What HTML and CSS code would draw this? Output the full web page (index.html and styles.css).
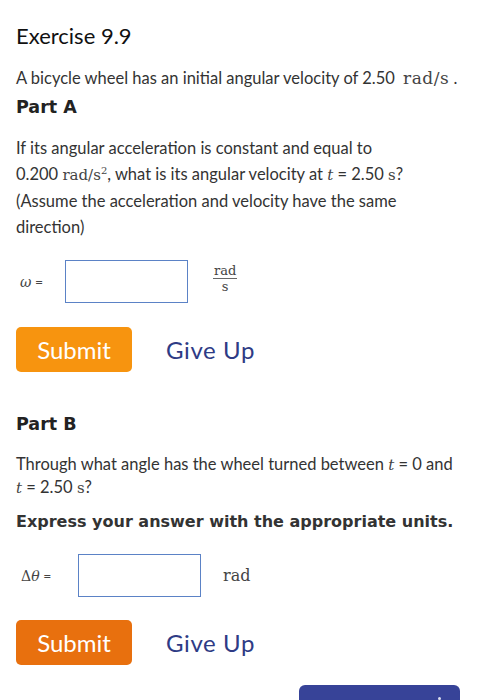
FILE: index.html
```html
<!DOCTYPE html>
<html>
<head>
<meta charset="utf-8">
<link rel="stylesheet" href="styles.css">
</head>
<body>
<div class="page">
  <h1 class="title">Exercise 9.9</h1>
  <p class="intro">A bicycle wheel has an initial angular velocity of 2.50 <span class="math unit-gap">rad/s</span> .</p>
  <h2 class="part part-a">Part A</h2>
  <p class="question">If its angular acceleration is constant and equal to<br>0.200 <span class="math">rad/s<sup>2</sup></span>, what is its angular velocity at <span class="math var">t</span> = 2.50 <span class="math">s</span>?<br>(Assume the acceleration and velocity have the same<br>direction)</p>
  <div class="answer answer-a">
    <span class="label"><span class="math var">ω</span> =</span>
    <span class="box"></span>
    <span class="frac"><span class="num">rad</span><span class="den">s</span></span>
  </div>
  <div class="actions">
    <span class="btn btn-a">Submit</span>
    <span class="giveup">Give Up</span>
  </div>
  <h2 class="part part-b">Part B</h2>
  <p class="question-b">Through what angle has the wheel turned between <span class="math var">t</span> = 0 and<br><span class="math var">t</span> = 2.50 <span class="math">s</span>?</p>
  <p class="express">Express your answer with the appropriate units.</p>
  <div class="answer answer-b">
    <span class="label"><span class="math">Δ</span><span class="math var">θ</span> =</span>
    <span class="box"></span>
    <span class="math unit">rad</span>
  </div>
  <div class="actions actions-b">
    <span class="btn btn-b">Submit</span>
    <span class="giveup">Give Up</span>
  </div>
  <div class="footer">
    <span class="next"><span class="dot"></span></span>
  </div>
</div>
</body>
</html>
```
FILE: styles.css
```css
html, body {
  margin: 0;
  padding: 0;
  background: #ffffff;
}
body {
  font-family: Lato, "Open Sans", sans-serif;
  color: #333333;
  overflow: hidden;
}
.page {
  padding: 0 16px;
  width: 446px;
  height: 700px;
  display: flex;
  flex-direction: column;
}
.title {
  font-size: 22px;
  font-weight: 400;
  line-height: 28px;
  margin: 22px 0 0;
  color: #111111;
}
.intro {
  font-size: 16.5px;
  line-height: 24px;
  margin: 16px 0 0;
}
.math {
  font-family: "DejaVu Serif", "Liberation Serif", serif;
  font-size: 15px;
  color: #444444;
}
.var {
  font-style: italic;
}
.unit-gap {
  margin-left: 4px;
  font-size: 17px;
  letter-spacing: 0.5px;
}
.math sup {
  font-size: 10px;
  line-height: 0;
}
.part {
  font-family: "DejaVu Sans", sans-serif;
  font-size: 17.5px;
  font-weight: 700;
  line-height: 24px;
  margin: 5px 0 0;
  color: #222222;
}
.question {
  font-size: 16.5px;
  line-height: 26px;
  margin: 16px 0 0;
}
.answer {
  display: flex;
  align-items: center;
}
.answer-a {
  margin-top: 20px;
}
.label {
  font-size: 14px;
  color: #444444;
  width: 49px;
  padding-left: 4px;
  box-sizing: border-box;
}
.answer-b .label {
  width: 62px;
  padding-left: 5px;
}
.label .math {
  font-size: 14px;
}
.box {
  width: 121px;
  height: 41px;
  border: 1px solid #5b82c6;
  box-sizing: content-box;
}
.frac {
  display: flex;
  flex-direction: column;
  align-items: center;
  margin-left: 25px;
  margin-top: -6px;
  font-family: "DejaVu Serif", "Liberation Serif", serif;
  font-size: 13px;
  color: #444444;
  line-height: 13px;
}
.frac .num {
  border-bottom: 1px solid #666666;
  padding: 0 1px 1px;
}
.frac .den {
  padding-top: 1px;
}
.unit {
  margin-left: 22px;
  font-size: 16px;
}
.actions {
  display: flex;
  align-items: center;
  margin-top: 24px;
}
.btn {
  width: 116px;
  height: 45px;
  border-radius: 5px;
  color: #ffffff;
  font-size: 24px;
  display: flex;
  align-items: center;
  justify-content: center;
  box-sizing: border-box;
}
.btn-a {
  background: #f7940f;
}
.btn-b {
  background: #e8700e;
}
.giveup {
  margin-left: 34px;
  font-size: 24px;
  letter-spacing: 0.6px;
  color: #2e3b85;
}
.part-b {
  margin-top: 40px;
}
.question-b {
  font-size: 16.5px;
  line-height: 22px;
  margin: 17px 0 0;
}
.express {
  font-family: "DejaVu Sans", sans-serif;
  font-size: 16px;
  font-weight: 700;
  line-height: 24px;
  margin: 11px 0 0;
  color: #333333;
}
.answer-b {
  margin-top: 20px;
}
.actions-b {
  margin-top: 23px;
}
.footer {
  display: flex;
  justify-content: flex-end;
  margin-top: 20px;
  padding-right: 2px;
}
.next {
  width: 161px;
  height: 30px;
  background: #374398;
  border-radius: 6px;
  position: relative;
}
.dot {
  position: absolute;
  left: 139px;
  top: 12px;
  width: 3px;
  height: 3px;
  border-radius: 50%;
  background: #dde0f0;
}
```
